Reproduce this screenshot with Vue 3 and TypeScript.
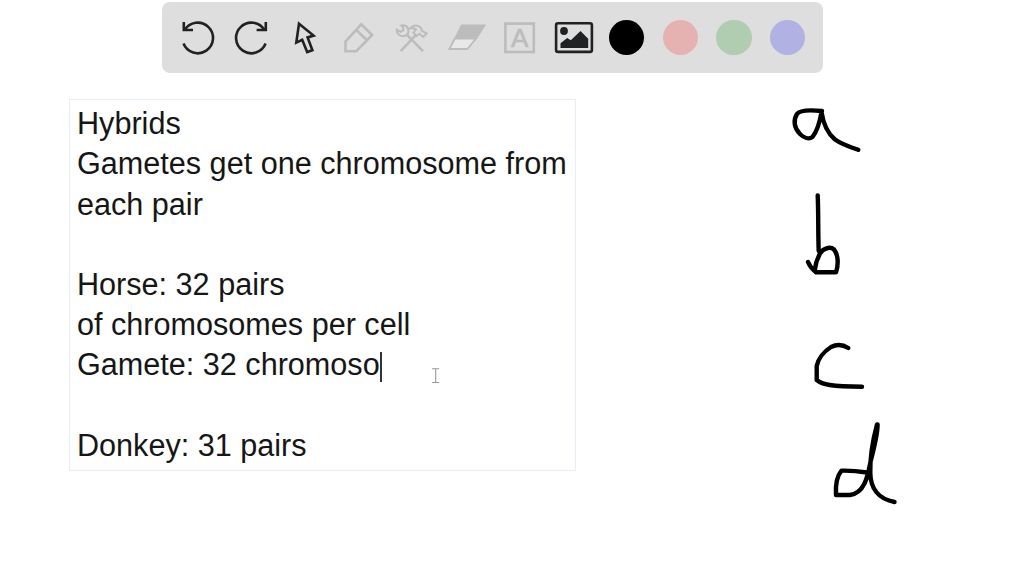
<script setup lang="ts">
const lines: string[] = [
  'Hybrids',
  'Gametes get one chromosome from',
  'each pair',
  '',
  'Horse: 32 pairs',
  'of chromosomes per cell',
  'Gamete: 32 chromoso',
  '',
  'Donkey: 31 pairs',
]
const caretLine = 6
const colors: string[] = ['black', 'red', 'green', 'blue']
</script>

<template>
  <main class="board">
    <nav class="toolbar">
      <svg class="icon" viewBox="-20 -20 40 40">
        <path d="M-14.5 5.6A15.3 15.3 0 1 0-13.4-7.9M-14.2-16V-8H-5" />
      </svg>
      <svg class="icon" viewBox="-20 -20 40 40">
        <path d="M13.6 5.6A15.3 15.3 0 1 1 12.5-7.9M13.8-16V-8H4.6" />
      </svg>
      <svg class="icon" viewBox="-20 -20 40 40">
        <path d="M-6-14.2 8.6-2.4 2.6-.6 7.4 12.2 2.2 14-2.8 1.8-8.7 4.6Z" />
      </svg>
      <svg class="icon muted" viewBox="-20 -20 40 40">
        <path d="M-13.5 13.3V3.6L2.3-13.6 13.1-3-2.8 13.3ZM-3.3-8.6 8 2.3" />
      </svg>
      <svg class="icon muted" viewBox="-20 -20 40 40">
        <path d="M-4.8-2.800 11 13.200M4-3.200-11.300 13.200" />
        <path class="hook" d="M-10.800-12.600C-7-13.500-3.200-11-3.600-6.800-3.400-3.400-6.500-2.200-9-1.800-12.600-1.600-15.400-4.600-15.300-8.400L-11.500-6.200-8.600-7.900-9-11Z" />
        <path class="hook" d="M-1.900-9.700C1.500-13 5.800-13.800 9.400-9.600L9.700-7.300 14.600-4.500 11-1.100 7.600-4.300 4.600-2 1.400-5.300 4-8.600C2-10 .2-10-1.900-9.700Z" />
      </svg>
      <svg class="icon muted" viewBox="-20 -20 40 40">
        <path class="eraser-tip" d="M-11.200.5H10L1.300 11H-16.600Z" />
        <path class="solid" d="M-4.900-13.500H20.200L10.800 1H-12Z" />
      </svg>
      <svg class="icon muted" viewBox="-20 -20 40 40">
        <rect x="-14.600" y="-14.400" width="28.400" height="28.400" />
        <text x="-.4" y="8.600" text-anchor="middle">A</text>
      </svg>
      <svg class="icon" viewBox="-20 -20 40 40">
        <rect x="-16.900" y="-14.700" width="35.800" height="28.600" rx="2" />
        <circle class="solid" cx="-9" cy="-7" r="3.900" />
        <path class="solid" d="M-12.500 10V5.200L-5.800 0-2.200 2.200 7.500-7.100 15.200.8V10Z" />
      </svg>
      <span v-for="color in colors" :key="color" class="swatch" :class="color"></span>
    </nav>

    <section class="note">
      <p v-for="(line, i) in lines" :key="i">{{ line }}<i v-if="i === caretLine" class="caret"></i></p>
    </section>

    <svg class="ink" viewBox="0 0 1024 576">
      <path d="M822 111C812 110 800 109.500 797 114C793 120 794 128 800 134C804 138 809 139.500 812.500 137C818 130 820 121 821.500 112C823 122 826 132 835 139.500C842 144.500 850 147 858.300 149.800" />
      <path d="M817.700 195.500C818.500 213 818 232 818.700 251M808 262C810 267 812 269 816 272.300H836C838.500 265 838.500 255 834 249.500C830 246 823 248.500 820 253.500C817.500 258 815.500 264 814.800 270" />
      <path d="M848.300 348C842 344 836 344.500 831 347C824 351.500 818 359 816.700 366V380C822 384.500 831 386.700 862 386.700" />
      <path d="M877.600 424.500C877.600 435 874 448 870.500 462C867.500 478 864 493 850 495H836C835.400 485 837 476 841.500 470.700C849 470.500 857 471 867 472.500M877 424.500C872 443 870 460 870.300 473C870.500 488 878 499 894.500 502" />
      <path class="pointer" d="M432.500 368.700H438.800M432.500 382.500H438.800M435.700 368.700V382.500" />
    </svg>
  </main>
</template>

<style>
body {
  margin: 0;
  overflow: hidden;
}
</style>

<style scoped>
.board {
  position: relative;
  box-sizing: border-box;
  width: 1024px;
  height: 576px;
  padding-top: 2px;
  background: #fff;
}
.toolbar {
  box-sizing: border-box;
  display: grid;
  grid-template-columns: repeat(12, 53.58px);
  place-items: center;
  width: 661px;
  height: 71px;
  margin-left: 162px;
  padding-left: 9.3px;
  border-radius: 8px;
  background: #dedede;
}
.icon {
  width: 40px;
  height: 40px;
  overflow: visible;
  color: #202123;
  fill: none;
  stroke: currentColor;
  stroke-width: 2.6;
}
.icon.muted {
  color: #bcbcbc;
}
.icon .solid {
  fill: currentColor;
  stroke: none;
}
.icon .hook {
  stroke-width: 2;
}
.icon .eraser-tip {
  fill: #e8e8e8;
  stroke-width: 1.8;
}
.icon text {
  fill: currentColor;
  stroke-width: 0.6;
  font: 26px "Liberation Sans", Arial, sans-serif;
}
.swatch {
  width: 35.5px;
  height: 35.5px;
  border-radius: 50%;
}
.black {
  background: #000;
}
.red {
  background: #e6b1b1;
}
.green {
  background: #b0ccb1;
}
.blue {
  background: #b2b1e3;
}
.note {
  box-sizing: border-box;
  width: 507px;
  height: 372px;
  margin: 26px 0 0 68.5px;
  padding: 3.3px 0 0 7.5px;
  border: 1.5px solid #e8edf6;
  color: #161616;
  font: 30.6px/40.2px "Liberation Sans", Arial, sans-serif;
}
.note p {
  height: 40.2px;
  margin: 0;
  white-space: pre;
}
.caret {
  display: inline-block;
  width: 2px;
  height: 30px;
  margin-right: -2px;
  vertical-align: -7px;
  background: #333;
}
.ink {
  position: absolute;
  inset: 0;
  width: 1024px;
  height: 576px;
  fill: none;
  stroke: #000;
  stroke-width: 4.4;
  stroke-linecap: round;
  stroke-linejoin: round;
  pointer-events: none;
}
.ink .pointer {
  stroke: #999;
  stroke-width: 1.1;
}
</style>
